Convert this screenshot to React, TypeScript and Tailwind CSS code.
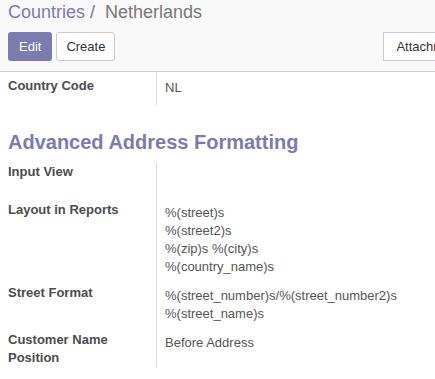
import React from "react";

const rows = [
  { label: "Input View", values: [] as string[], cls: "min-h-[38px]" },
  {
    label: "Layout in Reports",
    values: ["%(street)s", "%(street2)s", "%(zip)s %(city)s", "%(country_name)s"],
    cls: "",
  },
  {
    label: "Street Format",
    values: ["%(street_number)s/%(street_number2)s", "%(street_name)s"],
    cls: "",
  },
  { label: "Customer Name Position", values: ["Before Address"], cls: "" },
];

const App = () => {
  return (
    <div className="w-[435px] h-[379px] overflow-hidden bg-white text-[13px] text-[#4c4c4c] font-['Liberation_Sans',Arial,sans-serif]">
      {/* control panel */}
      <div className="h-[72px] bg-[#f9f9f9] border-b border-[#cfcfcf] pl-2">
        <div className="pt-[1px] text-[18px] leading-[22px]">
          <span className="text-[#7c7bad]">Countries</span>
          <span className="text-[#777]"> /&nbsp;&nbsp;Netherlands</span>
        </div>
        <div className="flex mt-[9px] overflow-hidden">
          <button className="shrink-0 h-[29px] px-[11px] rounded-[3px] bg-[#7c7bad] text-white text-[13px]">
            Edit
          </button>
          <button className="shrink-0 ml-1 h-[29px] px-[9px] rounded-[3px] bg-white border border-[#ccc] text-[#333] text-[13px]">
            Create
          </button>
          <button className="shrink-0 ml-[268px] h-[29px] px-3 bg-white border border-[#ccc] text-[#333] text-[13px]">
            Attachment(s)
          </button>
        </div>
      </div>

      {/* form */}
      <div className="grid grid-cols-[157px_1fr] leading-[18px]">
        <div className="pl-2 pt-[5px] pb-[10px] font-bold border-r border-[#ddd]">
          Country Code
        </div>
        <div className="pl-2 pt-[7px] text-[#555]">NL</div>
      </div>

      <h2 className="mt-[25px] pl-2 text-[20px] leading-[24px] font-bold text-[#7c7bad]">
        Advanced Address Formatting
      </h2>

      <div className="mt-[9px] grid grid-cols-[157px_1fr] leading-[18px]">
        {rows.map((r) => (
          <React.Fragment key={r.label}>
            <div className={`pl-2 pr-3 font-bold border-r border-[#ddd] ${r.cls}`}>
              {r.label}
            </div>
            <div className="pl-2 pt-[3px] pb-[8px] text-[#555]">
              {r.values.map((v) => (
                <div key={v}>{v}</div>
              ))}
            </div>
          </React.Fragment>
        ))}
      </div>
    </div>
  );
};

export default App;
